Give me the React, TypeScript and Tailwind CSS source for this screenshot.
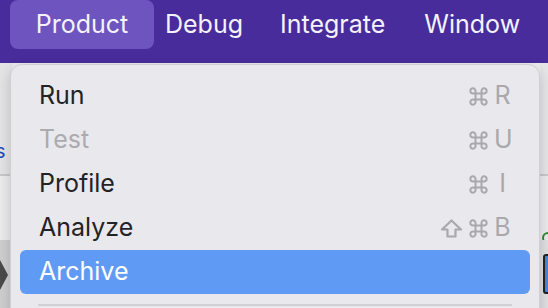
import React from "react";

type Item = {
  label: string;
  mods?: string[];
  keyName?: string;
  disabled?: boolean;
  active?: boolean;
};

const items: Item[] = [
  { label: "Run", mods: ["cmd"], keyName: "R" },
  { label: "Test", mods: ["cmd"], keyName: "U", disabled: true },
  { label: "Profile", mods: ["cmd"], keyName: "I" },
  { label: "Analyze", mods: ["shift", "cmd"], keyName: "B" },
  { label: "Archive", active: true },
];

function CmdGlyph() {
  return (
    <svg width="19" height="19" viewBox="0 0 19 19" fill="none" stroke="currentColor" strokeWidth="2">
      <path d="M6.5 6.5 H12.5 V12.5 H6.5 Z" />
      <path d="M6.5 6.5 V4 A2.6 2.6 0 1 0 4 6.5 H6.5" />
      <path d="M12.5 6.5 V4 A2.6 2.6 0 1 1 15 6.5 H12.5" />
      <path d="M6.5 12.5 V15 A2.6 2.6 0 1 1 4 12.5 H6.5" />
      <path d="M12.5 12.5 V15 A2.6 2.6 0 1 0 15 12.5 H12.5" />
    </svg>
  );
}

function ShiftGlyph() {
  return (
    <svg width="23" height="19" viewBox="0 0 23 19" fill="none" stroke="currentColor" strokeWidth="2.2" strokeLinejoin="round">
      <path d="M11.5 1.5 L21 10.5 H15.5 V17.5 H7.5 V10.5 H2 Z" />
    </svg>
  );
}

export default function App() {
  return (
    <div
      className="relative w-[548px] h-[308px] overflow-hidden bg-[#ececee]"
      style={{ fontFamily: "Inter, 'Noto Sans', sans-serif" }}
    >
      {/* menu bar */}
      <div className="h-[63px] bg-[#482c9b] flex items-start text-[25px] text-[#f4f2fb]">
        <div className="ml-[10px] h-[49px] w-[144px] rounded-[8px] bg-[#6e54bf] flex items-center justify-center">
          Product
        </div>
        <div className="h-[49px] flex items-center ml-[11px]">Debug</div>
        <div className="h-[49px] flex items-center ml-[37px]">Integrate</div>
        <div className="h-[49px] flex items-center ml-[39px] whitespace-nowrap">Window</div>
      </div>

      {/* window content behind the menu */}
      <div className="flex h-[245px]">
        <div className="w-[12px] flex flex-col">
          <div className="h-[113px] bg-[#e4e4e6] border-b-2 border-[#c9c9cc] relative overflow-hidden">
            <span className="absolute left-[-5px] top-[78px] text-[20px] leading-none text-[#1f47b8]">s</span>
          </div>
          <div className="h-[64px] bg-[#ececee]"></div>
          <div className="flex-1 bg-[#cfcfd2] relative">
            <div className="absolute left-0 top-[20px] w-0 h-0 border-y-[15px] border-y-transparent border-l-[8px] border-l-[#4a4a4d]" />
          </div>
        </div>
        <div className="flex-1" />
        <div className="w-[8px] flex flex-col">
          <div className="h-[113px] bg-[#e6e6e8] border-b-2 border-[#c9c9cc]"></div>
          <div className="h-[64px] bg-[#ececee] relative">
            <div className="absolute left-[2px] top-[56px] w-[12px] h-[12px] rounded-full border-2 border-[#2e8b2e]" />
          </div>
          <div className="flex-1 bg-[#e0e0e3] relative">
            <div className="absolute left-[3px] top-[14px] w-[12px] h-[40px] rounded-[3px] border-2 border-[#222] bg-[#4a86d8]" />
          </div>
        </div>
      </div>

      {/* dropdown menu */}
      <div className="absolute left-[10px] top-[64px] w-[530px] h-[260px] rounded-t-[12px] bg-[#e9e8ed] border border-[#cfcfd4] shadow-[0_4px_14px_rgba(0,0,0,0.18)] px-[9px] pt-[9px]">
        {items.map((it) => (
          <div
            key={it.label}
            className={`h-[44px] flex items-center justify-between pl-[19px] pr-[19px] rounded-[6px] text-[25px] ${
              it.active ? "bg-[#5f9bf5] text-white" : it.disabled ? "text-[#acabb0]" : "text-[#232325]"
            }`}
          >
            <span>{it.label}</span>
            {it.keyName && (
              <span className="flex items-center gap-[6px] text-[#a9a8ad]">
                {it.mods?.map((m) => (m === "cmd" ? <CmdGlyph key={m} /> : <ShiftGlyph key={m} />))}
                <span className="w-[17px] text-center">{it.keyName}</span>
              </span>
            )}
          </div>
        ))}
        <div className="mt-[10px] mx-[18px] h-[2px] bg-[#d2d2d6]" />
      </div>
    </div>
  );
}
